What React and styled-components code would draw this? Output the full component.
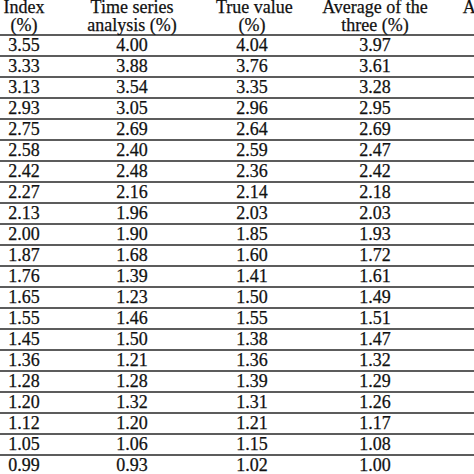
import styled, { createGlobalStyle } from 'styled-components';

const GlobalStyle = createGlobalStyle`
  html, body {
    margin: 0;
    padding: 0;
    background: #fff;
    overflow: hidden;
  }
  body {
    font-family: "Liberation Serif", "Times New Roman", serif;
    color: #111;
  }
`;

const Table = styled.div`
  width: 700px;
  margin-top: -2px;
  font-size: 18px;
  -webkit-text-stroke: 0.25px #111;
`;

const Row = styled.div`
  display: grid;
  grid-template-columns: 48px 168px 72px 174px 106px;
  border-top: ${props => (props.$header ? 'none' : '2px solid #5c5c5c')};
  line-height: ${props => (props.$header ? '18px' : '19px')};
`;

const Cell = styled.div`
  text-align: center;
  white-space: nowrap;
`;

const rows = [
  ['3.55', '4.00', '4.04', '3.97'],
  ['3.33', '3.88', '3.76', '3.61'],
  ['3.13', '3.54', '3.35', '3.28'],
  ['2.93', '3.05', '2.96', '2.95'],
  ['2.75', '2.69', '2.64', '2.69'],
  ['2.58', '2.40', '2.59', '2.47'],
  ['2.42', '2.48', '2.36', '2.42'],
  ['2.27', '2.16', '2.14', '2.18'],
  ['2.13', '1.96', '2.03', '2.03'],
  ['2.00', '1.90', '1.85', '1.93'],
  ['1.87', '1.68', '1.60', '1.72'],
  ['1.76', '1.39', '1.41', '1.61'],
  ['1.65', '1.23', '1.50', '1.49'],
  ['1.55', '1.46', '1.55', '1.51'],
  ['1.45', '1.50', '1.38', '1.47'],
  ['1.36', '1.21', '1.36', '1.32'],
  ['1.28', '1.28', '1.39', '1.29'],
  ['1.20', '1.32', '1.31', '1.26'],
  ['1.12', '1.20', '1.21', '1.17'],
  ['1.05', '1.06', '1.15', '1.08'],
  ['0.99', '0.93', '1.02', '1.00'],
];

export default function App() {
  return (
    <>
      <GlobalStyle />
      <Table>
        <Row $header>
          <Cell>Index<br />(%)</Cell>
          <Cell>Time series<br />analysis (%)</Cell>
          <Cell>True value<br />(%)</Cell>
          <Cell>Average of the<br />three (%)</Cell>
          <Cell>Absolute error<br />(%)</Cell>
        </Row>
        {rows.map((r, i) => (
          <Row key={i}>
            {r.map((v, j) => (
              <Cell key={j}>{v}</Cell>
            ))}
            <Cell />
          </Row>
        ))}
      </Table>
    </>
  );
}
